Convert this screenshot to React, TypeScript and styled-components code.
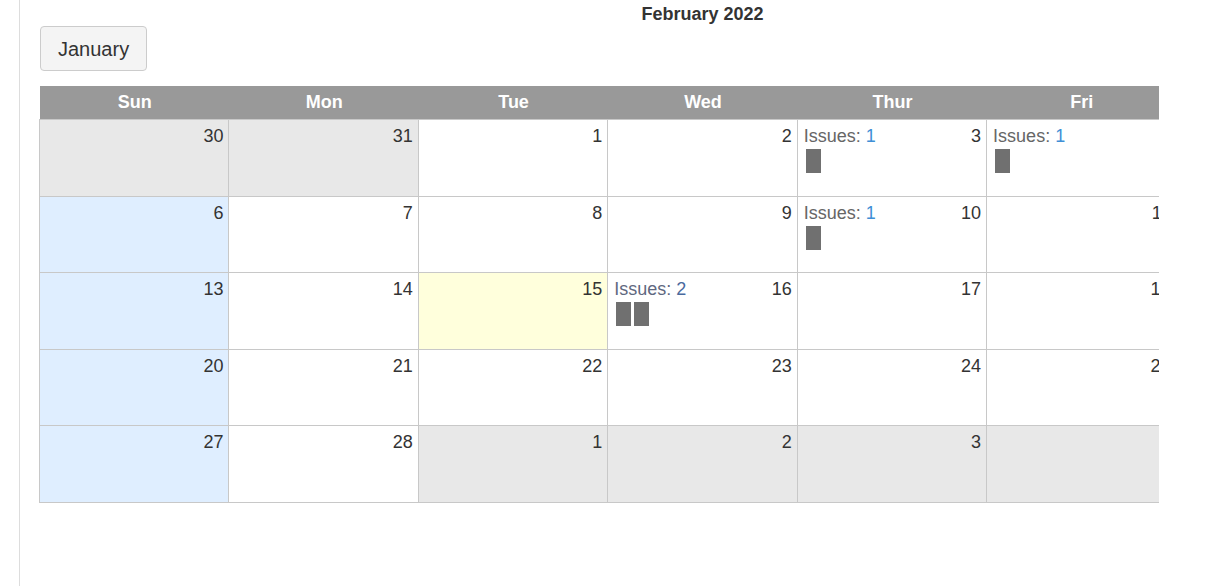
import React from "react";
import styled, { createGlobalStyle } from "styled-components";

const Global = createGlobalStyle`
  html, body { margin: 0; padding: 0; background: #fff; }
  body { font-family: "Liberation Sans", Arial, Helvetica, sans-serif; color: #333; }
`;

const Page = styled.div`
  margin-left: 19px;
  border-left: 1px solid #ddd;
  min-height: 586px;
  padding-left: 19px;
  box-sizing: border-box;
`;

const Viewport = styled.div`
  width: 1120px;
  overflow: hidden;
`;

const Calendar = styled.div`
  width: 1327px;
`;

const Title = styled.div`
  text-align: center;
  font-weight: bold;
  font-size: 18px;
  line-height: 21px;
  padding-top: 4px;
  color: #333;
`;

const NavButton = styled.button`
  margin: 1px 0 0 1px;
  font-family: inherit;
  font-size: 20px;
  line-height: 27px;
  padding: 9px 17px 7px;
  border: 1px solid #ccc;
  border-radius: 4px;
  background: #f4f4f4;
  color: #333;
  cursor: pointer;
`;

const HeaderRow = styled.div`
  margin: 15px 0 0 1px;
  height: 33px;
  box-sizing: border-box;
  padding-top: 6px;
  background: #999;
  display: grid;
  grid-template-columns: repeat(7, 1fr);
`;

const HeaderCell = styled.div`
  text-align: center;
  color: #fff;
  font-weight: bold;
  font-size: 18px;
  line-height: 21px;
`;

const Grid = styled.table`
  width: 1327px;
  border-collapse: collapse;
  table-layout: fixed;
`;

type Tone = "other" | "sunday" | "today" | "normal";

const toneBg: Record<Tone, string> = {
  other: "#e8e8e8",
  sunday: "#dfeeff",
  today: "#ffffdc",
  normal: "#fff",
};

const Day = styled.td<{ $tone: Tone }>`
  border: 1px solid #c8c8c8;
  height: 76.5px;
  box-sizing: border-box;
  vertical-align: top;
  padding: 6px 5px 0 6px;
  background: ${(p) => toneBg[p.$tone]};
`;

const DayHead = styled.div`
  display: flex;
  align-items: baseline;
  font-size: 18px;
  line-height: 21px;
`;

const IssueLabel = styled.span<{ $alt?: boolean }>`
  color: ${(p) => (p.$alt ? "#5f6880" : "#666")};
`;

const IssueCount = styled.a<{ $alt?: boolean }>`
  color: ${(p) => (p.$alt ? "#4a6a9e" : "#3f8fd6")};
  text-decoration: none;
`;

const DayNum = styled.span`
  margin-left: auto;
  color: #333;
`;

const Bars = styled.div`
  display: flex;
  gap: 3px;
  margin: 2px 0 0 2px;
`;

const Bar = styled.span`
  display: block;
  width: 15px;
  height: 24px;
  background: #707070;
`;

type DayData = { n: number; tone: Tone; issues?: number; alt?: boolean };

const weeks: DayData[][] = [
  [
    { n: 30, tone: "other" },
    { n: 31, tone: "other" },
    { n: 1, tone: "normal" },
    { n: 2, tone: "normal" },
    { n: 3, tone: "normal", issues: 1 },
    { n: 4, tone: "normal", issues: 1 },
    { n: 5, tone: "sunday" },
  ],
  [
    { n: 6, tone: "sunday" },
    { n: 7, tone: "normal" },
    { n: 8, tone: "normal" },
    { n: 9, tone: "normal" },
    { n: 10, tone: "normal", issues: 1 },
    { n: 11, tone: "normal" },
    { n: 12, tone: "sunday" },
  ],
  [
    { n: 13, tone: "sunday" },
    { n: 14, tone: "normal" },
    { n: 15, tone: "today" },
    { n: 16, tone: "normal", issues: 2, alt: true },
    { n: 17, tone: "normal" },
    { n: 18, tone: "normal" },
    { n: 19, tone: "sunday" },
  ],
  [
    { n: 20, tone: "sunday" },
    { n: 21, tone: "normal" },
    { n: 22, tone: "normal" },
    { n: 23, tone: "normal" },
    { n: 24, tone: "normal" },
    { n: 25, tone: "normal" },
    { n: 26, tone: "sunday" },
  ],
  [
    { n: 27, tone: "sunday" },
    { n: 28, tone: "normal" },
    { n: 1, tone: "other" },
    { n: 2, tone: "other" },
    { n: 3, tone: "other" },
    { n: 4, tone: "other" },
    { n: 5, tone: "other" },
  ],
];

const dayNames = ["Sun", "Mon", "Tue", "Wed", "Thur", "Fri", "Sat"];

export default function App() {
  return (
    <>
      <Global />
      <Page>
        <Viewport>
          <Calendar>
            <Title>February 2022</Title>
            <NavButton type="button">January</NavButton>
            <HeaderRow>
              {dayNames.map((d) => (
                <HeaderCell key={d}>{d}</HeaderCell>
              ))}
            </HeaderRow>
            <Grid>
              <tbody>
                {weeks.map((w, wi) => (
                  <tr key={wi}>
                    {w.map((d, di) => (
                      <Day key={di} $tone={d.tone}>
                        <DayHead>
                          {d.issues ? (
                            <IssueLabel $alt={d.alt}>
                              Issues:{" "}
                              <IssueCount href="#" $alt={d.alt}>
                                {d.issues}
                              </IssueCount>
                            </IssueLabel>
                          ) : null}
                          <DayNum>{d.n}</DayNum>
                        </DayHead>
                        {d.issues ? (
                          <Bars>
                            {Array.from({ length: d.issues }).map((_, i) => (
                              <Bar key={i} />
                            ))}
                          </Bars>
                        ) : null}
                      </Day>
                    ))}
                  </tr>
                ))}
              </tbody>
            </Grid>
          </Calendar>
        </Viewport>
      </Page>
    </>
  );
}
